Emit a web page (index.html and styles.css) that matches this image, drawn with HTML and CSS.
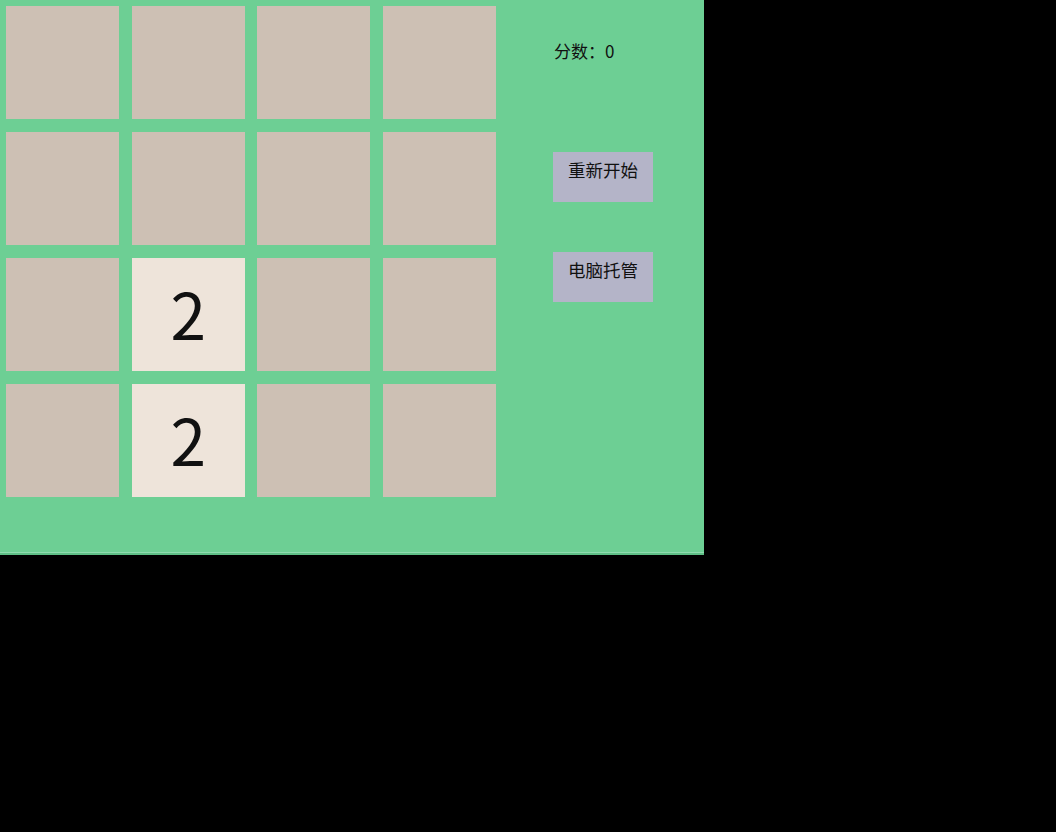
FILE: index.html
```html
<!DOCTYPE html>
<html lang="zh">
<head>
<meta charset="utf-8">
<title>2048</title>
<link rel="stylesheet" href="styles.css">
</head>
<body>
<div class="game">
  <div class="board">
    <div class="tile"></div>
    <div class="tile"></div>
    <div class="tile"></div>
    <div class="tile"></div>
    <div class="tile"></div>
    <div class="tile"></div>
    <div class="tile"></div>
    <div class="tile"></div>
    <div class="tile"></div>
    <div class="tile tile-2">2</div>
    <div class="tile"></div>
    <div class="tile"></div>
    <div class="tile"></div>
    <div class="tile tile-2">2</div>
    <div class="tile"></div>
    <div class="tile"></div>
  </div>
  <div class="side">
    <div class="score">分数：0</div>
    <div class="btn btn-restart">重新开始</div>
    <div class="btn btn-auto">电脑托管</div>
  </div>
</div>
</body>
</html>
```
FILE: styles.css
```css
html, body {
  margin: 0;
  padding: 0;
  background: #000;
}
body {
  font-family: "Noto Sans CJK SC", "Noto Sans", sans-serif;
  color: #111;
}
.game {
  display: flex;
  width: 704px;
  height: 555px;
  background: linear-gradient(to bottom, #6dcf94 0, #6dcf94 552px, #8fdcb0 552px, #8fdcb0 553px, #5fbf86 553px, #5fbf86 555px);
}
.board {
  display: grid;
  grid-template-columns: repeat(4, 113px);
  grid-auto-rows: 113px;
  column-gap: 12.67px;
  row-gap: 13px;
  padding: 6px;
  align-content: start;
}
.tile {
  background: #cdc0b4;
  display: flex;
  align-items: center;
  justify-content: center;
  font-size: 64px;
  line-height: 1;
  color: #111;
}
.tile-2 {
  background: #eee4da;
  padding-bottom: 6px;
  box-sizing: border-box;
}
.side {
  margin-left: 51px;
  padding-top: 39px;
  display: flex;
  flex-direction: column;
  align-items: flex-start;
}
.score {
  font-size: 17px;
  line-height: 23px;
  margin-left: 1px;
}
.btn {
  box-sizing: border-box;
  width: 100px;
  height: 50px;
  background: #b4b4c8;
  font-size: 17.5px;
  line-height: 26px;
  padding-top: 5px;
  text-align: center;
}
.btn-restart {
  margin-top: 90px;
}
.btn-auto {
  margin-top: 50px;
}
```
